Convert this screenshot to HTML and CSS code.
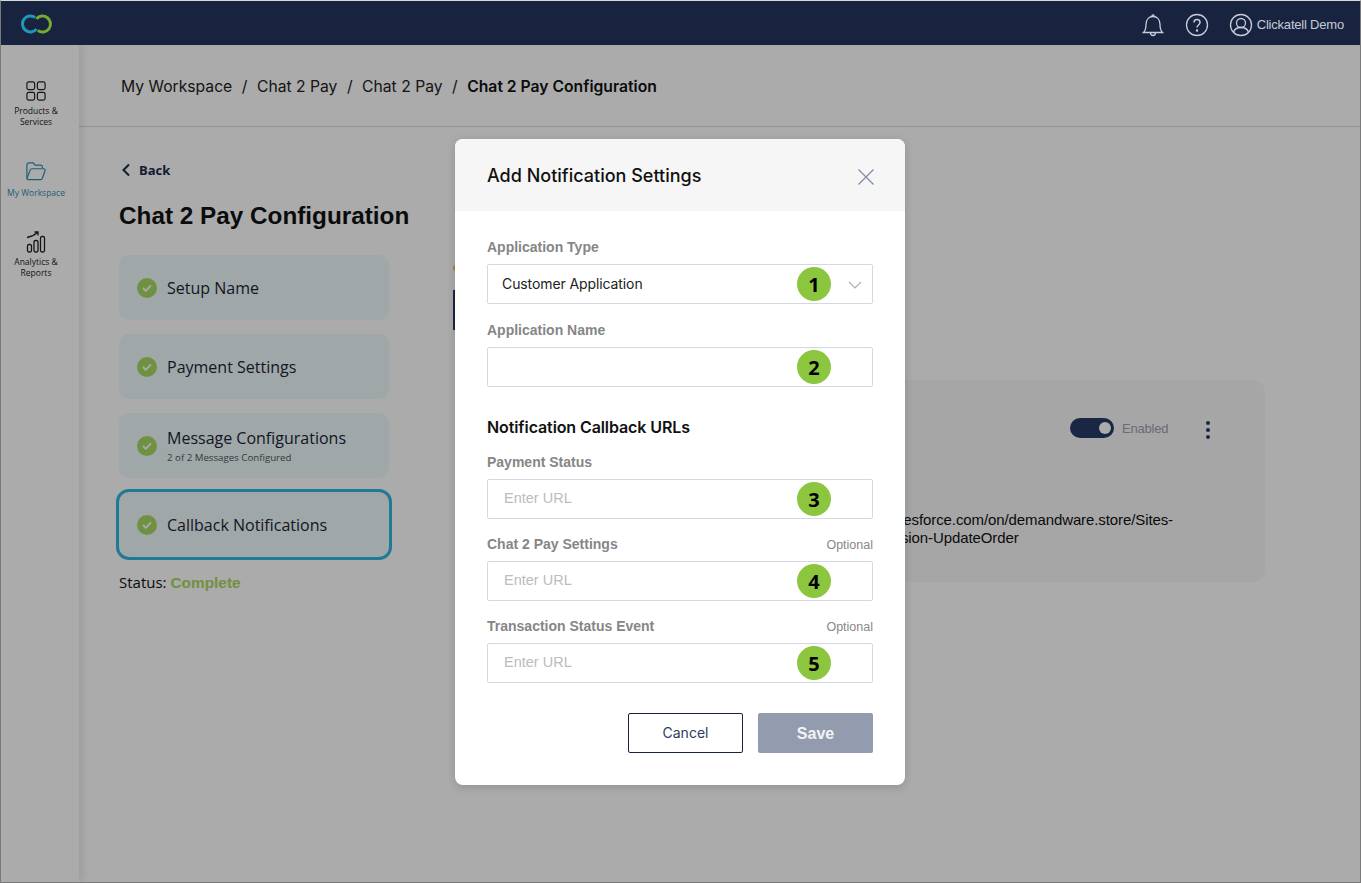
FILE: index.html
```html
<!DOCTYPE html>
<html lang="en">
<head>
<meta charset="utf-8">
<title>Chat 2 Pay Configuration</title>
<link rel="stylesheet" href="styles.css">
</head>
<body>
<div class="frame">
  <header class="topbar">
    <svg class="logo" width="32" height="20" viewBox="0 0 32 20" fill="none" stroke-width="3">
      <path d="M14.090 3.450A8 8 0 1 0 15.630 15.140" stroke="#1f97b9"/>
      <path d="M15.370 4.860A8 8 0 1 1 16.910 16.550" stroke="#75a92f"/>
    </svg>
    <div class="top-actions">
      <svg class="t-bell" width="22" height="26" viewBox="0 0 22 26" fill="none" stroke="#c6ccd6" stroke-width="1.300"><path d="M1.500 20.500c2-2 2.500-4 2.500-8 0-5 3-8 7-8s7 3 7 8c0 4 .5 6 2.500 8z"/><path d="M9.800 4.500c0-2 2.400-2 2.400 0M8.500 20.500c0 4 5 4 5 0"/></svg>
      <svg class="t-help" width="24" height="24" viewBox="0 0 24 24" fill="none" stroke="#c6ccd6" stroke-width="1.300"><circle cx="12" cy="12" r="10.500"/><path d="M9 9.500c0-4 6-4 6 0 0 2.500-3 2.500-3 5" stroke-width="1.500"/><circle cx="12" cy="17.500" r=".6"/></svg>
      <svg class="t-user" width="24" height="24" viewBox="0 0 24 24" fill="none" stroke="#c6ccd6" stroke-width="1.300"><circle cx="12" cy="12" r="10.500"/><circle cx="12" cy="10" r="4.500"/><path d="M4.500 19.500c1-4 4-5 7.500-5s6.500 1 7.500 5"/></svg>
      <span class="user-name">Clickatell Demo</span>
    </div>
  </header>
  <div class="body-row">
    <nav class="sidenav">
      <a class="nav-item">
        <svg width="20" height="22" viewBox="0 0 22 22" fill="none" stroke="#222" stroke-width="1.300"><rect x="1" y="1" width="8.500" height="8.500" rx="2"/><rect x="12.500" y="1" width="8.500" height="8.500" rx="2"/><rect x="1" y="12.500" width="8.500" height="8.500" rx="2"/><rect x="12.500" y="12.500" width="8.500" height="8.500" rx="2"/></svg>
        <span>Products &amp;<br>Services</span>
      </a>
      <a class="nav-item active">
        <svg width="20" height="22" viewBox="0 0 22 22" fill="none" stroke="#2e8fae" stroke-width="1.300"><path d="M1 19V4a2 2 0 0 1 2-2h5l2 2.500h6a2 2 0 0 1 2 2V8"/><path d="M1 19.500 4.500 10a2 2 0 0 1 2-1.500H19.500a1.500 1.500 0 0 1 1.500 2L18 19a2 2 0 0 1-2 1.500H3a2 2 0 0 1-2-1z"/></svg>
        <span>My Workspace</span>
      </a>
      <a class="nav-item">
        <svg width="20" height="22" viewBox="0 0 20 22" fill="none" stroke="#222" stroke-width="1.300"><rect x="1.500" y="13.500" width="4" height="7.500" rx="1.500"/><rect x="8" y="9.500" width="4" height="11.500" rx="1.500"/><rect x="14.500" y="5.500" width="4" height="15.500" rx="1.500"/><path d="M1 6.500c4-.5 7-2 10.500-5M8.500 1h3.500v3.500"/></svg>
        <span>Analytics &amp;<br>Reports</span>
      </a>
    </nav>
    <main class="content">
      <div class="crumbs">
        <span>My Workspace</span><i>/</i><span>Chat 2 Pay</span><i>/</i><span>Chat 2 Pay</span><i>/</i><b>Chat 2 Pay Configuration</b>
      </div>
      <div class="page">
        <aside class="steps-col">
          <a class="back"><svg width="10" height="14" viewBox="0 0 10 14" fill="none" stroke="#1b2a4a" stroke-width="2"><path d="M8 1.500 2.500 7 8 12.500"/></svg>Back</a>
          <h1>Chat 2 Pay Configuration</h1>
          <div class="step"><span class="check"><svg width="10" height="8" viewBox="0 0 10 8" fill="none" stroke="#fff" stroke-width="1.800"><path d="M1 4l2.800 2.800L9 1.300"/></svg></span><div>Setup Name</div></div>
          <div class="step"><span class="check"><svg width="10" height="8" viewBox="0 0 10 8" fill="none" stroke="#fff" stroke-width="1.800"><path d="M1 4l2.800 2.800L9 1.300"/></svg></span><div>Payment Settings</div></div>
          <div class="step"><span class="check"><svg width="10" height="8" viewBox="0 0 10 8" fill="none" stroke="#fff" stroke-width="1.800"><path d="M1 4l2.800 2.800L9 1.300"/></svg></span><div>Message Configurations<small>2 of 2 Messages Configured</small></div></div>
          <div class="step current"><span class="check"><svg width="10" height="8" viewBox="0 0 10 8" fill="none" stroke="#fff" stroke-width="1.800"><path d="M1 4l2.800 2.800L9 1.300"/></svg></span><div>Callback Notifications</div></div>
          <p class="status">Status: <b>Complete</b></p>
        </aside>
        <section class="detail">
          <span class="amber-dot"></span>
          <span class="hidden-btn"></span>
          <div class="card">
            <div class="card-head">
              <span class="toggle"></span><span class="enabled">Enabled</span>
              <span class="dots"><i></i><i></i><i></i></span>
            </div>
            <p class="url">salesforce.com/on/demandware.store/Sites-<br>ension-UpdateOrder</p>
          </div>
        </section>
      </div>
    </main>
  </div>
  <div class="scrim"></div>
  <div class="modal">
    <div class="modal-head">
      <h2>Add Notification Settings</h2>
      <svg class="close" width="18" height="18" viewBox="0 0 18 18" fill="none" stroke="#7d8aa3" stroke-width="1.200"><path d="M1.500 1.500l15 15M16.500 1.500l-15 15"/></svg>
    </div>
    <form class="modal-body">
      <div class="label-row first">Application Type</div>
      <div class="field select"><span>Customer Application</span>
        <svg class="chev" width="14" height="8" viewBox="0 0 14 8" fill="none" stroke="#a9afbb" stroke-width="1.100"><path d="M1 1l6 6 6-6"/></svg>
        <b class="pin">1</b></div>
      <div class="label-row wide">Application Name</div>
      <div class="field"><b class="pin">2</b></div>
      <h3>Notification Callback URLs</h3>
      <div class="label-row tight">Payment Status</div>
      <div class="field ph"><span>Enter URL</span><b class="pin">3</b></div>
      <div class="label-row"><span>Chat 2 Pay Settings</span><em>Optional</em></div>
      <div class="field ph"><span>Enter URL</span><b class="pin">4</b></div>
      <div class="label-row"><span>Transaction Status Event</span><em>Optional</em></div>
      <div class="field ph"><span>Enter URL</span><b class="pin">5</b></div>
      <div class="actions">
        <a class="btn cancel">Cancel</a>
        <a class="btn save">Save</a>
      </div>
    </form>
  </div>
</div>
</body>
</html>
```
FILE: styles.css
```css
* { box-sizing: border-box; }
html, body { margin: 0; height: 100%; }
body { font-family: "Liberation Sans", Arial, sans-serif; color: #111; }
.frame {
  position: relative; width: 1361px; height: 883px; overflow: hidden;
  border: 1px solid #7a7a7a; border-top-color: #d8d8d8;
  display: flex; flex-direction: column; background: #fff;
}
.topbar {
  position: relative; z-index: 3;
  height: 44px; flex: none; background: #17233f;
  display: flex; align-items: center; justify-content: space-between;
  padding: 3px 16px 0 20px;
}
.logo { display: block; margin-top: -1px; }
.top-actions { display: flex; align-items: center; }
.t-help { margin-left: 21px; }
.t-user { margin-left: 20px; }
.user-name { margin-left: 4px; font-size: 13px; letter-spacing: -.2px; color: #c6ccd6; }
.body-row { flex: 1; display: flex; min-height: 0; }
.sidenav {
  width: 78px; flex: none; background: #fff; box-shadow: 3px 0 8px rgba(0,0,0,.1);
  display: flex; flex-direction: column; align-items: center; gap: 33px;
  padding: 35px 8px 0 0; position: relative;
}
.nav-item {
  display: flex; flex-direction: column; align-items: center; text-align: center;
  font: 400 8.500px/11px "Open Sans", sans-serif; color: #222;
}
.nav-item span { margin-top: 3px; white-space: nowrap; }
.nav-item.active span { margin-top: 5px; }
.nav-item.active { color: #2e8fae; }
.content { flex: 1; min-width: 0; background: #fff; }
.crumbs {
  height: 82px; border-bottom: 1px solid #ddd; padding: 2px 0 0 42px;
  display: flex; align-items: center; font: 400 15.700px "Inter", sans-serif; color: #222;
}
.crumbs i { font-style: normal; margin: 0 9.500px; }
.crumbs b { font-weight: 600; color: #111; }
.page { display: flex; padding: 34px 0 0 40px; }
.steps-col { width: 270px; flex: none; }
.back {
  display: flex; align-items: center; gap: 8px; height: 18px; padding-left: 2px;
  font: 700 13px "Open Sans", sans-serif; color: #1b2a4a;
}
h1 { margin: 22px 0 24px; font-size: 24.300px; line-height: 30px; font-weight: 700; white-space: nowrap; color: #111; }
.step {
  height: 65px; border-radius: 10px; background: #edfafb; margin-bottom: 14px;
  display: flex; align-items: center; gap: 10px; padding-left: 18px;
  font: 400 16px/20px "Open Sans", sans-serif; color: #1c2536; position: relative;
}
.step small { display: block; margin-top: 3px; font-size: 9.700px; line-height: 13px; color: #555; }
.step.current { outline: 3px solid #2fb7dc; outline-offset: 0; }
.check {
  width: 20px; height: 20px; border-radius: 50%; background: #a8d862; flex: none;
  display: flex; align-items: center; justify-content: center;
}
.status { margin: 15px 0 0; font: 400 15px/20px "Open Sans", sans-serif; color: #111; }
.status b { font: 700 15.400px "Liberation Sans", sans-serif; color: #a8d862; }
.detail { flex: 1; position: relative; }
.amber-dot { display: block; width: 6px; height: 6px; border-radius: 50%; background: #f5c542; margin: 104px 0 0 64px; }
.hidden-btn { display: block; width: 120px; height: 40px; background: #263a66; margin: 19px 0 0 64px; }
.card {
  margin: 50px 95px 0 66px; height: 202px; border-radius: 12px; background: #f8f8f8; position: relative;
}
.card-head { position: absolute; top: 37px; right: 55px; display: flex; align-items: center; }
.toggle { width: 44px; height: 20px; border-radius: 10px; background: #263a66; position: relative; }
.toggle::after { content: ""; position: absolute; right: 3px; top: 4px; width: 12px; height: 12px; border-radius: 50%; background: #fff; }
.enabled { margin-left: 8px; font-size: 13px; color: #9ba1b3; letter-spacing: -.2px; width: 84px; }
.dots { display: flex; flex-direction: column; gap: 3px; margin-top: 4px; }
.dots i { width: 4px; height: 4px; border-radius: 50%; background: #263a66; }
.url { position: absolute; right: 92px; top: 131px; margin: 0; font-size: 15px; letter-spacing: -.1px; line-height: 17.600px; color: #111; white-space: nowrap; }
.scrim { position: absolute; inset: 44px 0 0 0; background: rgba(0,0,0,.33); z-index: 2; }
.modal {
  position: absolute; z-index: 4; left: 454px; top: 138px; width: 450px; height: 646px;
  background: #fff; border-radius: 8px; overflow: hidden; box-shadow: 0 2px 10px rgba(0,0,0,.15);
}
.modal-head {
  height: 72px; background: #f6f6f6; display: flex; align-items: center; justify-content: space-between;
  padding: 0 30px 0 32px;
}
.close { margin-top: 3px; }
h2 { margin: 0; font: 500 18px "Inter", sans-serif; color: #111; }
.modal-body { padding: 0 32px; }
.label-row {
  height: 17px; margin: 16px 0 9px; display: flex; align-items: center; justify-content: space-between;
  font: 700 14px "Liberation Sans", sans-serif; color: #868686;
}
.label-row.first { margin-top: 27px; }
.label-row.wide { margin-top: 17px; }
.label-row.tight { margin-top: 0; }
.label-row em { font-style: normal; font-weight: 400; font-size: 12.500px; color: #888; margin-top: 2px; }
.field {
  position: relative; height: 40px; border: 1px solid #d5d8e2; border-radius: 2px;
  display: flex; align-items: center; padding: 0 14px 2px; background: #fff;
  font: 400 14px "Inter", sans-serif; color: #222; letter-spacing: -.1px;
}
.field.ph { padding-left: 16px; color: #bcbcbc; font: 400 14.500px "Liberation Sans", sans-serif; letter-spacing: 0; }
.chev { position: absolute; right: 10px; top: 16px; }
.pin {
  position: absolute; left: 309px; top: 2px; width: 34px; height: 34px; border-radius: 50%;
  background: #8cc63f; color: #000; display: flex; align-items: center; justify-content: center;
  font: 700 20px "Open Sans", sans-serif; letter-spacing: 0;
}
h3 { margin: 30px 0 16px; font: 600 16px/20px "Inter", sans-serif; letter-spacing: -.1px; color: #111; }
.actions { display: flex; justify-content: flex-end; gap: 15px; margin-top: 30px; }
.btn {
  width: 115px; height: 40px; display: flex; align-items: center; justify-content: center;
  border-radius: 2px; font: 400 14px "Inter", sans-serif;
}
.cancel { border: 1px solid #17233f; color: #2a3b63; padding-bottom: 2px; }
.save { background: #939cae; color: #f2f3f6; font: 700 16px "Liberation Sans", sans-serif; padding-top: 1px; }
```
